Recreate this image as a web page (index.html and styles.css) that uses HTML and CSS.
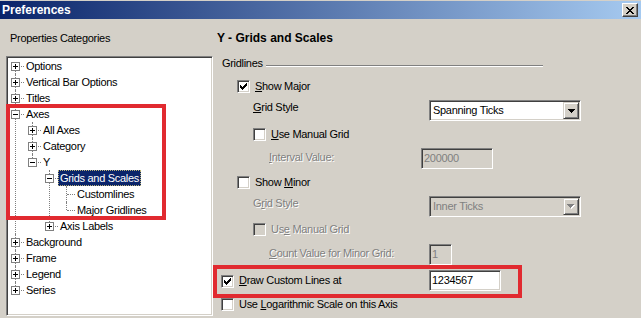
FILE: index.html
```
<!DOCTYPE html>
<html>
<head>
<meta charset="utf-8">
<title>Preferences</title>
<link rel="stylesheet" href="styles.css">
</head>
<body>
<div class="window">
  <div class="titlebar">
    <span class="title">Preferences</span>
    <span class="close"><svg width="8" height="7" viewBox="0 0 8 7" shape-rendering="crispEdges"><path d="M0 0h2v1H0z M6 0h2v1H6z M1 1h2v1H1z M5 1h2v1H5z M2 2h4v1H2z M3 3h2v1H3z M2 4h4v1H2z M1 5h2v1H1z M5 5h2v1H5z M0 6h2v1H0z M6 6h2v1H6z" fill="#000"/></svg></span>
  </div>
  <div class="body">
    <div class="left">
      <div class="cat-title">Properties Categories</div>
      <div class="tree">
        <ul class="tree-list">
          <li><div class="node"><span class="gut"><span class="exp plus"></span></span><span class="lbl">Options</span></div></li>
          <li><div class="node"><span class="gut"><span class="exp plus"></span></span><span class="lbl">Vertical Bar Options</span></div></li>
          <li><div class="node"><span class="gut"><span class="exp plus"></span></span><span class="lbl">Titles</span></div></li>
          <li><div class="node"><span class="gut"><span class="exp"></span></span><span class="lbl">Axes</span></div>
            <ul>
              <li><div class="node"><span class="gut"><span class="exp plus"></span></span><span class="lbl">All Axes</span></div></li>
              <li><div class="node"><span class="gut"><span class="exp plus"></span></span><span class="lbl">Category</span></div></li>
              <li><div class="node"><span class="gut"><span class="exp"></span></span><span class="lbl">Y</span></div>
                <ul>
                  <li><div class="node"><span class="gut"><span class="exp"></span></span><span class="lbl selected">Grids and Scales</span></div>
                    <ul>
                      <li><div class="node"><span class="gut"></span><span class="lbl">Customlines</span></div></li>
                      <li><div class="node"><span class="gut"></span><span class="lbl">Major Gridlines</span></div></li>
                    </ul>
                  </li>
                  <li><div class="node"><span class="gut"><span class="exp plus"></span></span><span class="lbl">Axis Labels</span></div></li>
                </ul>
              </li>
            </ul>
          </li>
          <li><div class="node"><span class="gut"><span class="exp plus"></span></span><span class="lbl">Background</span></div></li>
          <li><div class="node"><span class="gut"><span class="exp plus"></span></span><span class="lbl">Frame</span></div></li>
          <li><div class="node"><span class="gut"><span class="exp plus"></span></span><span class="lbl">Legend</span></div></li>
          <li><div class="node"><span class="gut"><span class="exp plus"></span></span><span class="lbl">Series</span></div></li>
        </ul>
      </div>
    </div>
    <div class="panel">
      <div class="heading">Y - Grids and Scales</div>
      <div class="group"><span>Gridlines</span><span class="etch"></span></div>

      <div class="check-row ind1 gap10">
        <span class="cb"><svg class="tick" width="7" height="7" viewBox="0 0 7 7" shape-rendering="crispEdges"><path d="M6 0h1v1H6z M5 1h2v1H5z M0 2h1v1H0z M4 2h3v1H4z M0 3h2v1H0z M3 3h3v1H3z M0 4h5v1H0z M1 5h3v1H1z M2 6h1v1H2z" fill="#000"/></svg></span>
        <span class="text"><u>S</u>how Major</span>
      </div>

      <div class="field-row gap7">
        <span class="flabel ind2"><u>G</u>rid Style</span>
        <div class="combo"><span class="combo-text">Spanning Ticks</span><span class="combo-btn"><svg width="7" height="4" viewBox="0 0 7 4" shape-rendering="crispEdges"><path d="M0 0h7v1H0z M1 1h5v1H1z M2 2h3v1H2z M3 3h1v1H3z" fill="#000"/></svg></span></div>
      </div>

      <div class="check-row ind2 gap7">
        <span class="cb"></span>
        <span class="text"><u>U</u>se Manual Grid</span>
      </div>

      <div class="field-row gap7">
        <span class="flabel ind3 off2 disabled"><u>I</u>nterval Value:</span>
        <div class="tbox disabled-box interval">200000</div>
      </div>

      <div class="check-row ind1 gap7">
        <span class="cb"></span>
        <span class="text">Show <u>M</u>inor</span>
      </div>

      <div class="field-row gap7">
        <span class="flabel ind2 disabled">G<u>r</u>id Style</span>
        <div class="combo disabled-box"><span class="combo-text">Inner Ticks</span><span class="combo-btn"><svg width="8" height="5" viewBox="0 0 8 5" shape-rendering="crispEdges"><path d="M1 1h7v1H1z M2 2h5v1H2z M3 3h3v1H3z M4 4h1v1H4z" fill="#fff"/><path d="M0 0h7v1H0z M1 1h5v1H1z M2 2h3v1H2z M3 3h1v1H3z" fill="#808080"/></svg></span></div>
      </div>

      <div class="check-row ind2 gap6">
        <span class="cb cb-disabled"></span>
        <span class="text disabled">Us<u>e</u> Manual Grid</span>
      </div>

      <div class="field-row gap8">
        <span class="flabel ind3 off2 disabled"><u>C</u>ount Value for Minor Grid:</span>
        <div class="tbox disabled-box count">1</div>
      </div>

      <div class="field-row gap5">
        <div class="custom">
          <span class="cb"><svg class="tick" width="7" height="7" viewBox="0 0 7 7" shape-rendering="crispEdges"><path d="M6 0h1v1H6z M5 1h2v1H5z M0 2h1v1H0z M4 2h3v1H4z M0 3h2v1H0z M3 3h3v1H3z M0 4h5v1H0z M1 5h3v1H1z M2 6h1v1H2z" fill="#000"/></svg></span>
          <span class="text"><u>D</u>raw Custom Lines at</span>
        </div>
        <div class="tbox custom-value">1234567</div>
      </div>

      <div class="check-row ind0 gap7">
        <span class="cb"></span>
        <span class="text">Use <u>L</u>ogarithmic Scale on this Axis</span>
      </div>
    </div>
  </div>
  <div class="mark mark-tree"></div>
  <div class="mark mark-custom"></div>
</div>
</body>
</html>
```
FILE: styles.css
```
html, body {
  margin: 0;
  padding: 0;
  background: #d4d0c8;
}

.window {
  position: relative;
  width: 641px;
  height: 318px;
  overflow: hidden;
  background: #d4d0c8;
  border-top: 1px solid #d4d0c8;
  box-sizing: border-box;
  font-family: "Liberation Sans", Arial, sans-serif;
  font-size: 11px;
  letter-spacing: -0.3px;
  color: #000;
}

.titlebar {
  height: 18px;
  display: flex;
  align-items: center;
  justify-content: space-between;
  background: linear-gradient(to right, #0a246a, #a6caf0);
}

.title {
  padding-left: 2px;
  color: #fff;
  font-weight: bold;
  font-size: 12px;
  letter-spacing: 0;
  line-height: 18px;
}

.close {
  width: 16px;
  height: 14px;
  margin-right: 3px;
  box-sizing: border-box;
  background: #d4d0c8;
  border: 1px solid;
  border-color: #fff #404040 #404040 #fff;
  box-shadow: inset -1px -1px #808080;
  display: flex;
  align-items: center;
  justify-content: center;
}

.body {
  display: flex;
  height: 299px;
}

.left {
  width: 213px;
  padding-left: 6px;
  box-sizing: border-box;
  flex: none;
}

.cat-title {
  height: 37px;
  box-sizing: border-box;
  padding-top: 12px;
  padding-left: 4px;
  line-height: 14px;
}

.tree {
  width: 207px;
  height: 260px;
  box-sizing: border-box;
  border: 1px solid;
  border-color: #808080 #fff #fff #808080;
  box-shadow: inset 1px 1px #404040, inset -1px -1px #d4d0c8;
  background: #fff;
  padding: 1px;
}

.tree ul {
  list-style: none;
  margin: 0;
  padding: 0;
}

.tree ul ul {
  padding-left: 17px;
}

.tree li {
  position: relative;
}

.tree li::before {
  content: "";
  position: absolute;
  left: 7px;
  top: 0;
  bottom: 0;
  border-left: 1px dotted #808080;
}

.tree-list > li:first-child::before {
  top: 8px;
}

.tree li:last-child::before {
  bottom: auto;
  height: 8px;
}

.node {
  display: flex;
  height: 16px;
  align-items: center;
}

.gut {
  position: relative;
  width: 16px;
  height: 16px;
  flex: none;
  display: flex;
  align-items: flex-start;
}

.gut::before {
  content: "";
  position: absolute;
  left: 8px;
  top: 8px;
  width: 8px;
  border-top: 1px dotted #808080;
}

.exp {
  position: relative;
  z-index: 1;
  width: 9px;
  height: 9px;
  margin: 4px 0 0 3px;
  box-sizing: border-box;
  border: 1px solid #808080;
  background: #fff;
}

.exp::before {
  content: "";
  position: absolute;
  left: 1px;
  top: 3px;
  width: 5px;
  height: 1px;
  background: #000;
}

.exp.plus::after {
  content: "";
  position: absolute;
  left: 3px;
  top: 1px;
  width: 1px;
  height: 5px;
  background: #000;
}

.lbl {
  padding: 0 1px;
  border: 1px solid transparent;
  line-height: 14px;
  white-space: nowrap;
}

.lbl.selected {
  background: #0a246a;
  color: #fff;
  border: 1px dotted #b8b078;
}

.panel {
  flex: 1;
  display: flex;
  flex-direction: column;
}

.heading {
  margin-top: 9px;
  height: 20px;
  line-height: 20px;
  padding-left: 4px;
  font-weight: bold;
  font-size: 12px;
  letter-spacing: 0;
}

.group {
  margin-top: 8px;
  height: 14px;
  line-height: 14px;
  display: flex;
  padding-left: 9px;
}

.etch {
  flex: 1;
  height: 0;
  margin: 9px 98px 0 3px;
  border-top: 1px solid #808080;
  border-bottom: 1px solid #fff;
}

.gap5 { margin-top: 5px; }
.gap6 { margin-top: 6px; }
.gap7 { margin-top: 7px; }
.gap8 { margin-top: 8px; }
.gap10 { margin-top: 10px; }

.ind0 { padding-left: 8px; }
.ind1 { padding-left: 24px; }
.ind2 { padding-left: 40px; }
.ind3 { padding-left: 56px; }
.off2 { margin-top: 2px; }

.check-row {
  display: flex;
  align-items: center;
  height: 13px;
}

.check-row .text {
  margin-left: 5px;
  line-height: 13px;
  white-space: nowrap;
}

.cb {
  width: 13px;
  height: 13px;
  flex: none;
  box-sizing: border-box;
  border: 1px solid;
  border-color: #808080 #fff #fff #808080;
  box-shadow: inset 1px 1px #404040, inset -1px -1px #d4d0c8;
  background: #fff;
  position: relative;
}

.cb-disabled {
  background: #d4d0c8;
}

.tick {
  display: block;
  margin: 2px 0 0 2px;
}

.field-row {
  display: grid;
  grid-template-columns: 216px auto;
  align-items: start;
  height: 21px;
}

.flabel {
  line-height: 14px;
  white-space: nowrap;
}

.disabled {
  color: #808080;
  text-shadow: 1px 1px 0 #fff;
}

.combo {
  width: 152px;
  height: 21px;
  box-sizing: border-box;
  border: 1px solid;
  border-color: #808080 #fff #fff #808080;
  box-shadow: inset 1px 1px #404040, inset -1px -1px #d4d0c8;
  padding: 1px;
  background: #fff;
  display: flex;
}

.combo-text {
  flex: 1;
  padding-left: 2px;
  line-height: 17px;
  white-space: nowrap;
}

.combo-btn {
  width: 16px;
  height: 17px;
  box-sizing: border-box;
  border: 1px solid;
  border-color: #d4d0c8 #404040 #404040 #d4d0c8;
  box-shadow: inset 1px 1px #fff, inset -1px -1px #808080;
  background: #d4d0c8;
  display: flex;
  align-items: center;
  justify-content: center;
}

.disabled-box {
  background: #d4d0c8;
  color: #808080;
}

.tbox {
  height: 21px;
  box-sizing: border-box;
  border: 1px solid;
  border-color: #808080 #fff #fff #808080;
  box-shadow: inset 1px 1px #404040, inset -1px -1px #d4d0c8;
  padding: 1px 1px 1px 2px;
  line-height: 17px;
  white-space: nowrap;
}

.tbox.interval {
  width: 72px;
  margin-left: -8px;
}

.tbox.count {
  width: 23px;
}

.tbox.custom-value {
  width: 72px;
  background: #fff;
}

.custom {
  display: flex;
  align-items: flex-start;
  padding-left: 8px;
}

.custom .cb {
  margin-top: 5px;
}

.custom .text {
  margin-left: 5px;
  margin-top: 3px;
  line-height: 14px;
  white-space: nowrap;
}

.mark {
  position: absolute;
  box-sizing: border-box;
  border: 4px solid #e12a30;
}

.mark-tree {
  left: 6px;
  top: 103px;
  width: 160px;
  height: 116px;
}

.mark-custom {
  left: 213px;
  top: 264px;
  width: 309px;
  height: 33px;
}
```
